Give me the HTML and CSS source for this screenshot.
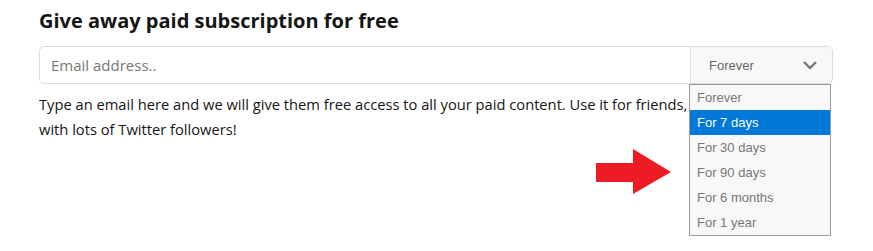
FILE: index.html
```html
<!DOCTYPE html>
<html lang="en">
<head>
  <meta charset="UTF-8">
  <title>Give away subscription</title>
  <link rel="stylesheet" href="styles.css">
</head>
<body>

  <div class="giveaway">
    <h2>Give away paid subscription for free</h2>

    <div class="field">
      <input type="text" class="email" placeholder="Email address..">
      <div class="period">
        <span>Forever</span>
        <svg class="chevron" width="16" height="10" viewBox="0 0 16 10">
          <path d="M2 2 L8 8 L14 2" fill="none" stroke="#777" stroke-width="2.4"/>
        </svg>
        <ul class="options">
          <li>Forever</li>
          <li class="active">For 7 days</li>
          <li>For 30 days</li>
          <li>For 90 days</li>
          <li>For 6 months</li>
          <li>For 1 year</li>
        </ul>
      </div>
    </div>

    <p class="hint">Type an email here and we will give them free access to all your paid content. Use it for friends, with lots of Twitter followers!</p>

    <svg class="arrow" width="76" height="46" viewBox="0 0 76 46">
      <polygon points="0,14 37,14 37,0 75,23 37,45 37,33 0,33" fill="#ed1c24"/>
    </svg>
  </div>

</body>
</html>
```

FILE: styles.css
```css
html, body {
  height: 100%;
}

body {
  margin: 0;
  min-height: 251px;
  background-color: #fff;
  font-family: "Open Sans", "Noto Sans", sans-serif;
  color: #111;
}

.giveaway {
  position: relative;
  width: 794px;
  height: 244px;
  padding: 7px 0 0 39px;
}

h2 {
  font-size: 20px;
  font-weight: 700;
  margin: 0 0 12px 0;
  color: #151515;
}

.field {
  display: flex;
  height: 38px;
  border: 1px solid #dcdcdc;
  border-radius: 5px;
  box-sizing: border-box;
}

.email {
  flex: 1;
  border: none;
  border-radius: 5px 0 0 5px;
  padding: 0 11px;
  font-family: "Open Sans", "Noto Sans", sans-serif;
  font-size: 15px;
  outline: none;
}

.email::placeholder {
  color: #777;
}

.period {
  position: relative;
  width: 142px;
  display: flex;
  align-items: center;
  justify-content: space-between;
  padding: 0 14px 0 18px;
  box-sizing: border-box;
  background-color: #f8f8f8;
  border-left: 1px solid #f2dede;
  border-radius: 0 5px 5px 0;
  font-family: "Liberation Sans", sans-serif;
  font-size: 13px;
  color: #666;
}

.options {
  position: absolute;
  top: 37px;
  left: -2px;
  width: 142px;
  margin: 0;
  padding: 0;
  list-style: none;
  background-color: #f8f8f8;
  border: 1px solid #9a9a9a;
  box-sizing: border-box;
  z-index: 2;
}

.options li {
  height: 25px;
  line-height: 25px;
  padding-left: 7px;
  color: #777;
}

.options li.active {
  background-color: #0078d7;
  color: #fff;
}

.hint {
  max-width: 649px;
  margin: 8px 0 0 0;
  font-size: 14.7px;
  line-height: 25px;
  color: #151515;
}

.arrow {
  position: absolute;
  left: 596px;
  top: 149px;
}
```
